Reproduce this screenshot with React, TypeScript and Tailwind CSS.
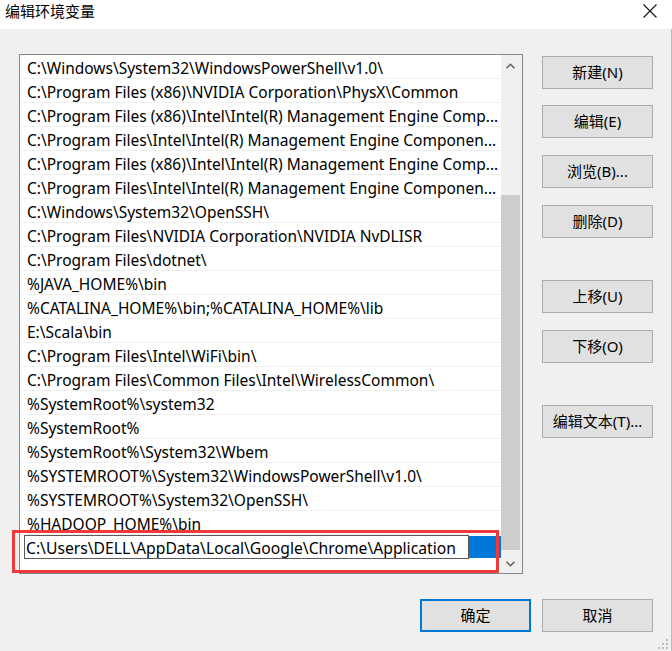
import React from "react";

// Paths shown in the list (as truncated in the original dialog)
const paths = [
  "C:\\Windows\\System32\\WindowsPowerShell\\v1.0\\",
  "C:\\Program Files (x86)\\NVIDIA Corporation\\PhysX\\Common",
  "C:\\Program Files (x86)\\Intel\\Intel(R) Management Engine Comp...",
  "C:\\Program Files\\Intel\\Intel(R) Management Engine Componen...",
  "C:\\Program Files (x86)\\Intel\\Intel(R) Management Engine Comp...",
  "C:\\Program Files\\Intel\\Intel(R) Management Engine Componen...",
  "C:\\Windows\\System32\\OpenSSH\\",
  "C:\\Program Files\\NVIDIA Corporation\\NVIDIA NvDLISR",
  "C:\\Program Files\\dotnet\\",
  "%JAVA_HOME%\\bin",
  "%CATALINA_HOME%\\bin;%CATALINA_HOME%\\lib",
  "E:\\Scala\\bin",
  "C:\\Program Files\\Intel\\WiFi\\bin\\",
  "C:\\Program Files\\Common Files\\Intel\\WirelessCommon\\",
  "%SystemRoot%\\system32",
  "%SystemRoot%",
  "%SystemRoot%\\System32\\Wbem",
  "%SYSTEMROOT%\\System32\\WindowsPowerShell\\v1.0\\",
  "%SYSTEMROOT%\\System32\\OpenSSH\\",
  "%HADOOP_HOME%\\bin",
];

const font = "font-['Microsoft_YaHei_UI','Noto_Sans','Noto_Sans_CJK_SC',sans-serif]";

function WinButton({ label, className = "" }: { label: string; className?: string }) {
  return (
    <div
      className={`flex h-[33px] w-[111px] items-center justify-center border border-[#adadad] bg-[#e1e1e1] text-[15px] text-black ${className}`}
    >
      {label}
    </div>
  );
}

function Chevron({ up }: { up?: boolean }) {
  return (
    <svg width="9" height="6" viewBox="0 0 9 6" className="block">
      <path
        d={up ? "M0.5 5.2 L4.5 1.2 L8.5 5.2" : "M0.5 0.8 L4.5 4.8 L8.5 0.8"}
        fill="none"
        stroke="#606060"
        strokeWidth="1.5"
      />
    </svg>
  );
}

export default function App() {
  return (
    <div className={`relative h-[651px] w-[672px] overflow-hidden bg-[#f0f0f0] ${font}`}>
      {/* Title bar */}
      <div className="flex h-[29px] items-start justify-between bg-white">
        <span className="pl-[5px] pt-[1px] text-[15px] leading-[20px] text-black">编辑环境变量</span>
        <svg width="14" height="14" viewBox="0 0 14 14" className="mr-[15px] mt-[4px]">
          <path d="M0.5 0.5 L13.5 13.5 M13.5 0.5 L0.5 13.5" stroke="#111" strokeWidth="1.1" />
        </svg>
      </div>

      <div className="flex h-[622px] border-r border-[#b9b9b9]">
        <div className="flex flex-col pl-[19px] pt-[25px]">
          <div className="flex gap-[19px]">
            {/* List box */}
            <div className="flex h-[520px] w-[504px] border border-[#828790] bg-white">
              <div className="flex w-[481px] flex-col">
                {paths.map((p, i) => (
                  <div
                    key={i}
                    className="flex h-[24px] shrink-0 items-center overflow-hidden whitespace-nowrap border-b border-[#f0f0f0] pl-[7px] pt-[2px] text-[15.5px] leading-[20px] text-black"
                  >
                    {p}
                  </div>
                ))}
                {/* Row being edited */}
                <div className="flex h-[24px] shrink-0 items-center">
                  <div className="ml-[4px] flex h-[24px] w-[445px] items-center border border-[#5a5a5a] bg-white pl-[1px] pt-[1px] text-[15.7px] leading-[20px] text-black">
                    C:\Users\DELL\AppData\Local\Google\Chrome\Application
                  </div>
                  <div className="h-[22px] flex-1 bg-[#0078d7]" />
                </div>
              </div>
              {/* Scrollbar */}
              <div className="flex w-[21px] flex-col bg-[#f0f0f0]">
                <div className="flex h-[20px] shrink-0 items-center justify-center pr-[2px] pt-[2px]">
                  <Chevron up />
                </div>
                <div className="h-[120px] shrink-0" />
                <div className="h-[355px] w-[19px] shrink-0 bg-[#cdcdcd]" />
                <div className="flex flex-1 items-center justify-center pr-[2px] pt-[5px]">
                  <Chevron />
                </div>
              </div>
            </div>

            {/* Side buttons */}
            <div className="flex flex-col pt-[2px]">
              <WinButton label="新建(N)" />
              <WinButton label="编辑(E)" className="mt-[16px]" />
              <WinButton label="浏览(B)..." className="mt-[17px]" />
              <WinButton label="删除(D)" className="mt-[17px]" />
              <WinButton label="上移(U)" className="mt-[42px]" />
              <WinButton label="下移(O)" className="mt-[17px]" />
              <WinButton label="编辑文本(T)..." className="mt-[42px]" />
            </div>
          </div>

          {/* Bottom buttons */}
          <div className="mt-[25px] flex justify-end gap-[11px]">
            <div className="flex h-[33px] w-[111px] items-center justify-center border-2 border-[#0078d7] bg-[#e1e1e1] text-[15px] text-black">
              确定
            </div>
            <WinButton label="取消" />
          </div>
        </div>
      </div>

      {/* Red annotation box */}
      <div className="pointer-events-none absolute left-[12px] top-[530px] h-[43px] w-[487px] border-[3px] border-[#f03a3a]" />

      {/* Resize grip */}
      <svg width="12" height="12" viewBox="0 0 12 12" className="absolute bottom-[1px] right-[3px]">
        <rect x="9" y="1" width="2" height="2" fill="#bcbcbc" />
        <rect x="5" y="5" width="2" height="2" fill="#bcbcbc" />
        <rect x="9" y="5" width="2" height="2" fill="#bcbcbc" />
        <rect x="1" y="9" width="2" height="2" fill="#bcbcbc" />
        <rect x="5" y="9" width="2" height="2" fill="#bcbcbc" />
        <rect x="9" y="9" width="2" height="2" fill="#bcbcbc" />
      </svg>
    </div>
  );
}
